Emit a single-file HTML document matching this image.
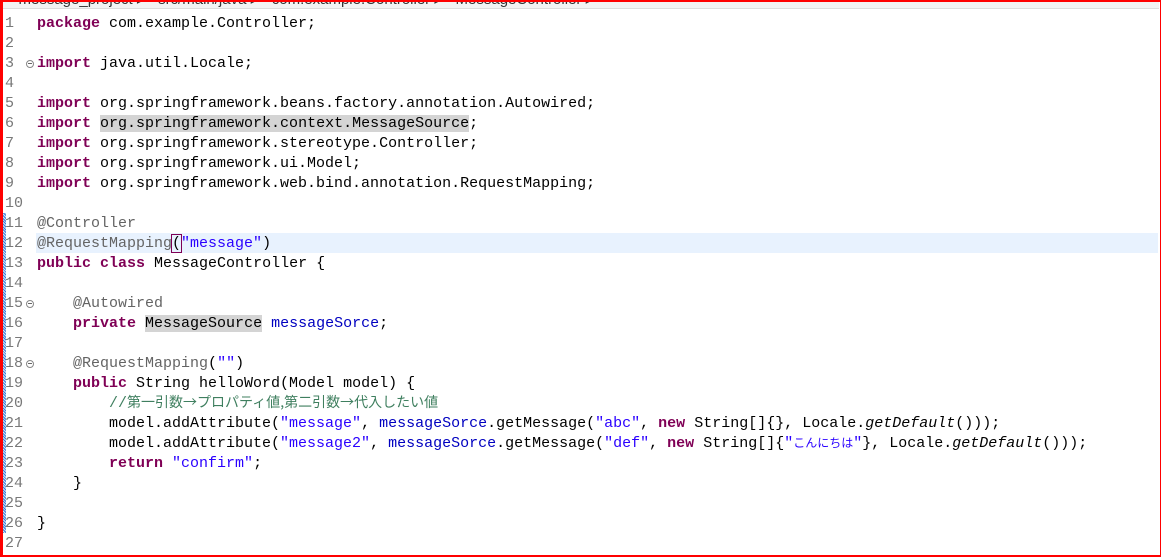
<!DOCTYPE html>
<html><head><meta charset="utf-8"><style>
html,body{margin:0;padding:0;background:#fff;}
body{width:1161px;height:557px;position:relative;overflow:hidden;}
.frame{position:absolute;left:0;top:0;width:1157px;height:553px;border:2px solid #f00;border-left-width:3px;border-right-width:2px;box-sizing:content-box;}
.crumb{position:absolute;left:3px;top:0;width:1156px;height:8px;background:#f3f3f3;overflow:hidden;border-bottom:1px solid #ddd;}
.crumb span{position:absolute;top:-10px;font:15px "Liberation Sans",sans-serif;color:#333;white-space:nowrap;}
.bar{position:absolute;left:3px;top:213px;width:3px;height:320px;background:repeating-linear-gradient(45deg,#3b7fd6 0 1px,#cfe2f8 1px 2px);}
.hl{position:absolute;left:36px;top:233px;width:1122px;height:20px;background:#e8f2fe;}
.ln{position:absolute;left:5px;top:14px;font:15px/20px "Liberation Mono",monospace;color:#787878;white-space:pre;}
.code{position:absolute;left:37px;top:14px;font:15px/20px "Liberation Mono","Noto Sans CJK JP",monospace;color:#000;white-space:pre;}
.code div{height:20px;}
.k{color:#7f0055;font-weight:bold}
.s{color:#2a00ff}
.a{color:#646464}
.c{color:#3f7f5f}
.f{color:#0000c0}
.g{background:#d4d4d4}
.i{font-style:italic}
.j{font-family:"Noto Sans CJK JP",sans-serif;font-size:14px;line-height:0}
.j2{font-family:"Noto Sans CJK JP",sans-serif;font-size:12px;line-height:0}
.fold{position:absolute;left:26px;width:6px;height:6px;border:1px solid #888;border-radius:50%;font-size:0}
.fold:after{content:"";position:absolute;left:1px;top:2px;width:4px;height:1px;background:#666}
.br{outline:1px solid #7f0055}
</style></head><body>
<div class="crumb"><span style="left:6px">▪ message_project ▸ ▪ src/main/java ▸ ▪ com.example.Controller ▸ ▪ MessageController ▸</span></div>
<div class="hl"></div>
<div class="bar"></div>
<div class="ln">1
2
3
4
5
6
7
8
9
10
11
12
13
14
15
16
17
18
19
20
21
22
23
24
25
26
27</div>
<div class="fold" style="top:60px"></div>
<div class="fold" style="top:300px"></div>
<div class="fold" style="top:360px"></div>
<div class="code"><div><span class="k">package</span> com.example.Controller;</div><div></div><div><span class="k">import</span> java.util.Locale;</div><div></div><div><span class="k">import</span> org.springframework.beans.factory.annotation.Autowired;</div><div><span class="k">import</span> <span class="g">org.springframework.context.MessageSource</span>;</div><div><span class="k">import</span> org.springframework.stereotype.Controller;</div><div><span class="k">import</span> org.springframework.ui.Model;</div><div><span class="k">import</span> org.springframework.web.bind.annotation.RequestMapping;</div><div></div><div><span class="a">@Controller</span></div><div><span class="a">@RequestMapping</span><span class="br">(</span><span class="s">"message"</span>)</div><div><span class="k">public</span> <span class="k">class</span> MessageController {</div><div></div><div>    <span class="a">@Autowired</span></div><div>    <span class="k">private</span> <span class="g">MessageSource</span> <span class="f">messageSorce</span>;</div><div></div><div>    <span class="a">@RequestMapping</span>(<span class="s">""</span>)</div><div>    <span class="k">public</span> String helloWord(Model model) {</div><div>        <span class="c">//<span class="j">第一引数→プロパティ値,第二引数→代入したい値</span></span></div><div>        model.addAttribute(<span class="s">"message"</span>, <span class="f">messageSorce</span>.getMessage(<span class="s">"abc"</span>, <span class="k">new</span> String[]{}, Locale.<span class="i">getDefault</span>()));</div><div>        model.addAttribute(<span class="s">"message2"</span>, <span class="f">messageSorce</span>.getMessage(<span class="s">"def"</span>, <span class="k">new</span> String[]{<span class="s">"<span class="j2">こんにちは</span>"</span>}, Locale.<span class="i">getDefault</span>()));</div><div>        <span class="k">return</span> <span class="s">"confirm"</span>;</div><div>    }</div><div></div><div>}</div><div></div></div>
<div class="frame"></div>
</body></html>
